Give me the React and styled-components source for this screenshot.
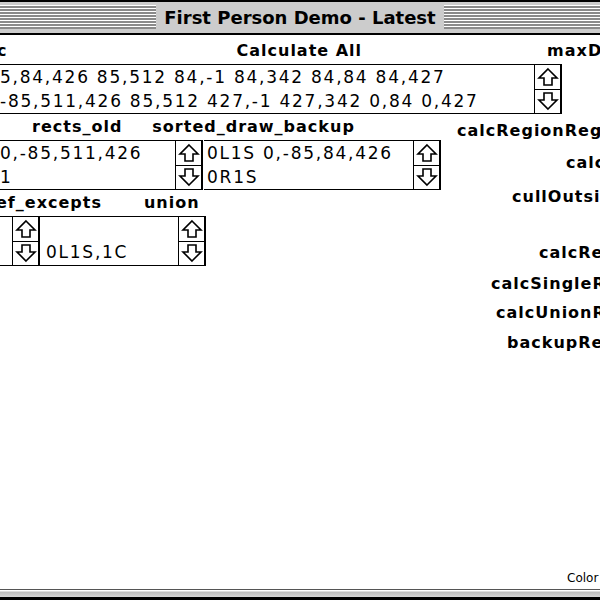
import React from 'react';
import styled, { createGlobalStyle } from 'styled-components';

const GlobalStyle = createGlobalStyle`
  html, body {
    margin: 0;
    padding: 0;
    background: #ffffff;
    overflow: hidden;
  }
`

const UpArrow = () => (
  <svg width="22" height="20" viewBox="0 0 22 20">
    <polygon points="11,2 20,11 15,11 15,18 7,18 7,11 2,11" fill="none" stroke="#000" strokeWidth="1.6" />
  </svg>
)

const DownArrow = () => (
  <svg width="22" height="20" viewBox="0 0 22 20">
    <polygon points="11,18 20,9 15,9 15,2 7,2 7,9 2,9" fill="none" stroke="#000" strokeWidth="1.6" />
  </svg>
)

const Field = ({ lines, width, indent, bottom }) => (
  <FieldBox>
    <FieldText width={width} indent={indent} bottom={bottom}>
      {lines.map((l, i) => <Line key={i}>{l}</Line>)}
    </FieldText>
    <Scroller>
      <ArrowCell><UpArrow /></ArrowCell>
      <ArrowCell last><DownArrow /></ArrowCell>
    </Scroller>
  </FieldBox>
)

export default class App extends React.Component {
  render() {
    return (
      <Window>
        <GlobalStyle />
        <TitleBar>
          <Title>First Person Demo - Latest</Title>
        </TitleBar>
        <Content>
          <LabelRow>
            <Label left={-3}>c</Label>
            <Label left={229}>Calculate All</Label>
            <Label left={185}>maxD</Label>
          </LabelRow>
          <FieldRow>
            <Field
              width={534}
              indent={-5}
              lines={[
                '5,84,426 85,512 84,-1 84,342 84,84 84,427',
                '-85,511,426 85,512 427,-1 427,342 0,84 0,427',
              ]}
            />
          </FieldRow>
          <Lower>
            <LeftPane>
              <LabelRow>
                <Label left={32}>rects_old</Label>
                <Label left={30}>sorted_draw_backup</Label>
              </LabelRow>
              <FieldRow gap={1}>
                <Field width={175} indent={-1} lines={['0,-85,511,426', '1']} />
                <Field width={209} indent={3} lines={['0L1S 0,-85,84,426', '0R1S']} />
              </FieldRow>
              <LabelRow>
                <Label left={-4}>ef_excepts</Label>
                <Label left={42}>union</Label>
              </LabelRow>
              <FieldRow>
                <Field width={12} lines={['']} />
                <Field width={138} indent={6} bottom lines={['0L1S,1C']} />
              </FieldRow>
            </LeftPane>
            <RightPane>
              <Button left={17} top={2}>calcRegionRegions</Button>
              <Button left={126} top={10}>calcRects</Button>
              <Button left={72} top={12}>cullOutside</Button>
              <Button left={99} top={34}>calcRects</Button>
              <Button left={51} top={9}>calcSingleRects</Button>
              <Button left={56} top={7}>calcUnionRects</Button>
              <Button left={67} top={8}>backupRects</Button>
            </RightPane>
          </Lower>
        </Content>
        <Footer>
          <FooterLabel>Color</FooterLabel>
        </Footer>
        <ScrollEdge />
      </Window>
    )
  }
}

const Window = styled.div`
  width: 600px;
  height: 600px;
  display: flex;
  flex-direction: column;
  overflow: hidden;
  background: #ffffff;
`

const TitleBar = styled.div`
  height: 31px;
  flex-shrink: 0;
  display: flex;
  align-items: center;
  justify-content: center;
  border-top: 2px solid #000;
  border-bottom: 2px solid #000;
  background:
    repeating-linear-gradient(to bottom, #ffffff 0px, #ffffff 1.5px, #8a8a8a 1.5px, #8a8a8a 3px) 0 3px / 100% 24px no-repeat,
    #cccccc;
`

const Title = styled.div`
  font-family: 'DejaVu Sans', sans-serif;
  font-weight: bold;
  font-size: 18px;
  color: #000;
  background: #cccccc;
  padding: 2px 8px;
  line-height: 24px;
`

const Content = styled.div`
  flex: 1;
  display: flex;
  flex-direction: column;
  padding-top: 3px;
`

const LabelRow = styled.div`
  height: 24px;
  display: flex;
  align-items: center;
  white-space: nowrap;
`

const Label = styled.div`
  margin-left: ${p => p.left || 0}px;
  font-family: 'DejaVu Sans', sans-serif;
  font-weight: bold;
  font-size: 16px;
  letter-spacing: 1px;
  color: #000;
`

const FieldRow = styled.div`
  display: flex;
  gap: ${p => p.gap || 0}px;
  margin-top: 2px;
`

const FieldBox = styled.div`
  display: flex;
  height: 50px;
  box-sizing: border-box;
  border: 1.5px solid #000;
  border-left: none;
  flex-shrink: 0;
`

const FieldText = styled.div`
  width: ${p => p.width}px;
  box-sizing: border-box;
  overflow: hidden;
  display: flex;
  flex-direction: column;
  justify-content: ${p => (p.bottom ? 'flex-end' : 'flex-start')};
  padding-left: ${p => p.indent || 0}px;
  padding-bottom: ${p => (p.bottom ? 1 : 0)}px;
  font-family: 'DejaVu Sans', sans-serif;
  font-size: 17px;
  letter-spacing: 1.75px;
  color: #000;
  white-space: nowrap;
`

const Line = styled.div`
  height: 24px;
  line-height: 24px;
`

const Scroller = styled.div`
  width: 27px;
  box-sizing: border-box;
  display: flex;
  flex-direction: column;
  border-left: 1.5px solid #000;
  border-right: 1.5px solid #000;
`

const ArrowCell = styled.div`
  flex: 1;
  display: flex;
  align-items: center;
  justify-content: center;
  border-bottom: ${p => (p.last ? 'none' : '1.5px solid #000')};
`

const Lower = styled.div`
  display: flex;
`

const LeftPane = styled.div`
  width: 440px;
  display: flex;
  flex-direction: column;
`

const RightPane = styled.div`
  flex: 1;
  display: flex;
  flex-direction: column;
  white-space: nowrap;
  padding-top: 4px;
`

const Button = styled.div`
  margin-left: ${p => p.left}px;
  margin-top: ${p => p.top}px;
  font-family: 'DejaVu Sans', sans-serif;
  font-weight: bold;
  font-size: 16px;
  letter-spacing: 1px;
  line-height: 22px;
  color: #000;
`

const Footer = styled.div`
  height: 22px;
  display: flex;
  align-items: center;
  padding-left: 567px;
  white-space: nowrap;
`

const FooterLabel = styled.div`
  font-family: 'DejaVu Sans', sans-serif;
  font-size: 12px;
  color: #000;
`

const ScrollEdge = styled.div`
  height: 11px;
  flex-shrink: 0;
  box-sizing: border-box;
  border-top: 1px solid #555;
  border-bottom: 3px solid #000;
  background: linear-gradient(to bottom, #ffffff 0px, #ffffff 1px, #bdbdbd 2px, #d6d6d6 7px);
`
